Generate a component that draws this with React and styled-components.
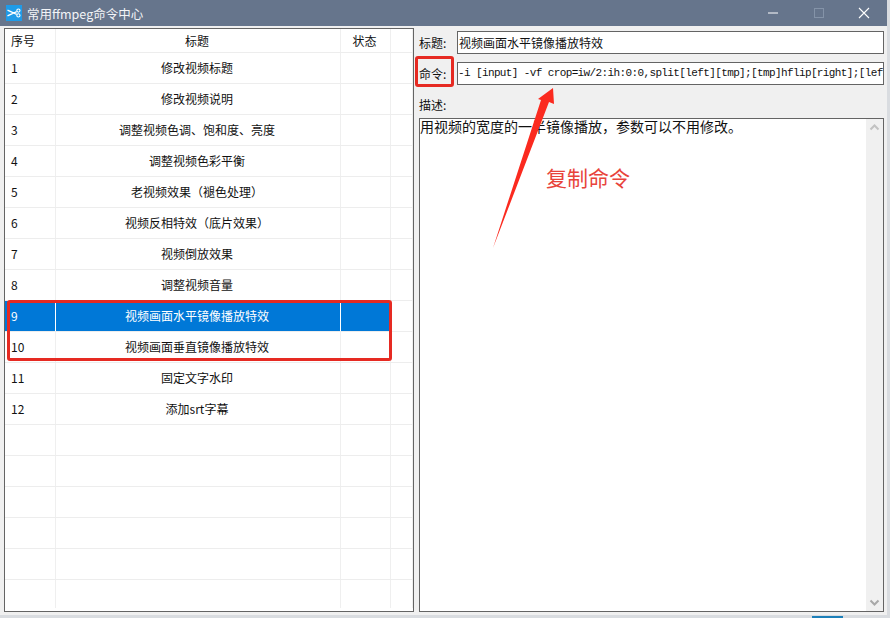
import React from "react";
import styled, { createGlobalStyle } from "styled-components";

const GlobalStyle = createGlobalStyle`
  html, body {
    margin: 0;
    width: 890px;
    height: 618px;
    overflow: hidden;
    background: #d9dce0;
  }
`;

const rows = [
  "修改视频标题",
  "修改视频说明",
  "调整视频色调、饱和度、亮度",
  "调整视频色彩平衡",
  "老视频效果（褪色处理）",
  "视频反相特效（底片效果）",
  "视频倒放效果",
  "调整视频音量",
  "视频画面水平镜像播放特效",
  "视频画面垂直镜像播放特效",
  "固定文字水印",
  "添加srt字幕",
  "", "", "", "", "", "",
];

const cjk = `"Noto Sans CJK SC", "Liberation Sans", sans-serif`;

const App = () => {
  return (
    <>
      <GlobalStyle />
      <Window>
        <TitleBar>
          <AppIcon viewBox="0 0 16 16">
            <rect width="16" height="16" fill="#1f9be8" />
            <path d="M1.5 5.2l9.2 4.2M1.5 10.8l9.2-4.2" stroke="#fff" strokeWidth="1.3" />
            <circle cx="12.4" cy="5.6" r="1.6" fill="none" stroke="#fff" strokeWidth="1.1" />
            <circle cx="12.4" cy="10.4" r="1.6" fill="none" stroke="#fff" strokeWidth="1.1" />
          </AppIcon>
          <TitleText>常用ffmpeg命令中心</TitleText>
          <WindowButtons>
            <WindowButton>
              <svg width="12" height="12" viewBox="0 0 12 12">
                <path d="M1 6h10" stroke="#fff" strokeWidth="1" />
              </svg>
            </WindowButton>
            <WindowButton>
              <svg width="12" height="12" viewBox="0 0 12 12">
                <rect x="1.5" y="1.5" width="9" height="9" fill="none" stroke="#8493a8" strokeWidth="1" />
              </svg>
            </WindowButton>
            <WindowButton>
              <svg width="12" height="12" viewBox="0 0 12 12">
                <path d="M1 1l10 10M11 1L1 11" stroke="#fff" strokeWidth="1.1" />
              </svg>
            </WindowButton>
          </WindowButtons>
        </TitleBar>
        <Content>
          <ListPanel>
            <HeaderRow>
              <HeaderCell $align="left">序号</HeaderCell>
              <HeaderCell>标题</HeaderCell>
              <HeaderCell>状态</HeaderCell>
              <HeaderCell />
            </HeaderRow>
            {rows.map((title, i) => (
              <Row key={i}>
                <Cell $align="left" $selected={i === 8}>{title ? i + 1 : ""}</Cell>
                <Cell $selected={i === 8}>{title}</Cell>
                <Cell $selected={i === 8} />
                <Cell />
              </Row>
            ))}
          </ListPanel>
          <DetailPanel>
            <FieldRow>
              <FieldLabel>标题:</FieldLabel>
              <FieldBox>视频画面水平镜像播放特效</FieldBox>
            </FieldRow>
            <FieldRow>
              <FieldLabel>命令:</FieldLabel>
              <CommandBox>-i [input] -vf crop=iw/2:ih:0:0,split[left][tmp];[tmp]hflip[right];[lef</CommandBox>
            </FieldRow>
            <DescLabel>描述:</DescLabel>
            <DescBox>
              <DescText>用视频的宽度的一半镜像播放，参数可以不用修改。</DescText>
              <ScrollBar>
                <svg width="17" height="17" viewBox="0 0 17 17">
                  <path d="M4.5 10.5l4-4 4 4" fill="none" stroke="#c2c2c2" strokeWidth="2" />
                </svg>
                <svg width="17" height="17" viewBox="0 0 17 17">
                  <path d="M4.5 6.5l4 4 4-4" fill="none" stroke="#a8a8a8" strokeWidth="2" />
                </svg>
              </ScrollBar>
            </DescBox>
          </DetailPanel>
        </Content>

        <RowsMark />
        <CommandMark />
        <Arrow width="70" height="170" viewBox="0 0 70 170">
          <polygon points="3,163 51,15 48,14 63,3 64,19 59,17" fill="#fb2a1f" />
        </Arrow>
        <Note>复制命令</Note>
      </Window>
      <DesktopPeek />
    </>
  );
};

export default App;

const Window = styled.div`
  position: relative;
  width: 887px;
  height: 615px;
  display: flex;
  flex-direction: column;
  background: #f0f0f0;
  font-family: ${cjk};
  color: #111;
`;
const TitleBar = styled.div`
  height: 26px;
  flex: none;
  display: flex;
  align-items: center;
  padding-left: 6px;
  background: #66758c;
`;
const AppIcon = styled.svg`
  width: 16px;
  height: 16px;
  flex: none;
`;
const TitleText = styled.span`
  margin-left: 5px;
  font-size: 12.5px;
  color: #f2f4f7;
`;
const WindowButtons = styled.div`
  margin-left: auto;
  display: flex;
  height: 100%;
`;
const WindowButton = styled.div`
  width: 45.5px;
  display: flex;
  align-items: center;
  justify-content: center;
  svg {
    display: block;
  }
`;
const Content = styled.div`
  flex: 1;
  min-height: 0;
  display: flex;
  padding: 2px 3px 3px 4px;
  gap: 5px;
`;
const ListPanel = styled.div`
  box-sizing: border-box;
  width: 410px;
  height: 584px;
  flex: none;
  overflow: hidden;
  background: #fff;
  border: 1px solid #646464;
`;
const HeaderRow = styled.div`
  display: grid;
  grid-template-columns: 51px 285px 50px 22px;
  height: 23px;
`;
const HeaderCell = styled.div`
  display: flex;
  align-items: center;
  justify-content: ${(p) => (p.$align === "left" ? "flex-start" : "center")};
  padding: ${(p) => (p.$align === "left" ? "0 0 0 6px" : "0 2px 0 0")};
  font-size: 12px;
  border-right: 1px solid #efefef;
`;
const Row = styled.div`
  display: grid;
  grid-template-columns: 51px 285px 50px 22px;
  box-sizing: border-box;
  height: 31px;
  border-top: 1px solid #ededed;
  &:last-child {
    height: 29px;
  }
`;
const Cell = styled.div`
  display: flex;
  align-items: center;
  justify-content: ${(p) => (p.$align === "left" ? "flex-start" : "center")};
  padding: ${(p) => (p.$align === "left" ? "0 0 2px 6px" : "0 2px 2px 0")};
  font-size: 12px;
  background: ${(p) => (p.$selected ? "#0078d7" : "transparent")};
  color: ${(p) => (p.$selected ? "#fff" : "#111")};
  border-right: 1px solid ${(p) => (p.$selected ? "#fff" : "#efefef")};
`;
const DetailPanel = styled.div`
  flex: 1;
  min-width: 0;
  display: flex;
  flex-direction: column;
  padding-top: 3px;
`;
const FieldRow = styled.div`
  display: flex;
  align-items: center;
  height: 23px;
  margin-bottom: 8px;
`;
const FieldLabel = styled.span`
  width: 38px;
  flex: none;
  font-size: 12px;
  white-space: nowrap;
`;
const FieldBox = styled.div`
  box-sizing: border-box;
  width: 427px;
  height: 23px;
  padding-left: 1px;
  line-height: 21px;
  font-size: 12px;
  background: #fff;
  border: 1px solid #646464;
`;
const CommandBox = styled(FieldBox)`
  padding-left: 0;
  white-space: nowrap;
  font-family: "Liberation Mono", monospace;
  font-size: 11px;
  letter-spacing: -0.62px;
`;
const DescLabel = styled.span`
  margin-top: 3px;
  font-size: 12px;
  line-height: 18px;
  height: 22px;
`;
const DescBox = styled.div`
  box-sizing: border-box;
  width: 465px;
  height: 494px;
  display: flex;
  background: #fff;
  border: 1px solid #646464;
`;
const DescText = styled.div`
  flex: 1;
  font-size: 14px;
  line-height: 15px;
`;
const ScrollBar = styled.div`
  width: 17px;
  flex: none;
  display: flex;
  flex-direction: column;
  justify-content: space-between;
  background: #f0f0f0;
`;
const RowsMark = styled.div`
  position: absolute;
  left: 7px;
  top: 300px;
  box-sizing: border-box;
  width: 385px;
  height: 61px;
  border: 3px solid #e62a22;
  border-radius: 3px;
`;
const CommandMark = styled.div`
  position: absolute;
  left: 415px;
  top: 56px;
  box-sizing: border-box;
  width: 39px;
  height: 31px;
  border: 3px solid #e62a22;
  border-radius: 3px;
`;
const Arrow = styled.svg`
  position: absolute;
  left: 490px;
  top: 85px;
`;
const Note = styled.span`
  position: absolute;
  left: 546px;
  top: 162px;
  font-size: 21px;
  line-height: 30px;
  color: #e8433b;
`;
const DesktopPeek = styled.div`
  position: absolute;
  left: 812px;
  top: 616px;
  width: 31px;
  height: 2px;
  background: #1c7fb8;
`;
